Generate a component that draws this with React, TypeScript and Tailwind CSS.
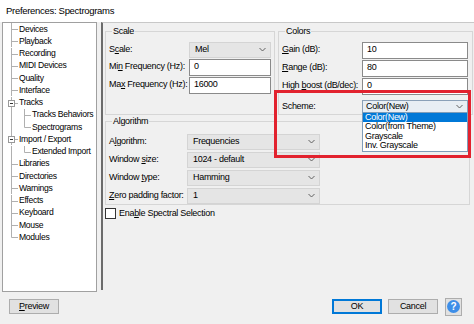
import React from "react";

const FONT = { fontFamily: "'Liberation Sans', Arial, sans-serif" };

type Node = { label: string; depth: 0 | 1; expander?: boolean; lastChild?: boolean; last?: boolean };

const tree: Node[] = [
  { label: "Devices", depth: 0 },
  { label: "Playback", depth: 0 },
  { label: "Recording", depth: 0 },
  { label: "MIDI Devices", depth: 0 },
  { label: "Quality", depth: 0 },
  { label: "Interface", depth: 0 },
  { label: "Tracks", depth: 0, expander: true },
  { label: "Tracks Behaviors", depth: 1 },
  { label: "Spectrograms", depth: 1, lastChild: true },
  { label: "Import / Export", depth: 0, expander: true },
  { label: "Extended Import", depth: 1, lastChild: true },
  { label: "Libraries", depth: 0 },
  { label: "Directories", depth: 0 },
  { label: "Warnings", depth: 0 },
  { label: "Effects", depth: 0 },
  { label: "Keyboard", depth: 0 },
  { label: "Mouse", depth: 0 },
  { label: "Modules", depth: 0, last: true },
];

function TreeLines({ node }: { node: Node }) {
  const w = node.depth === 0 ? 15 : 28;
  return (
    <svg width={w} height="12" className="shrink-0" stroke="#b0b0b0" strokeWidth="1" fill="none">
      <line x1="8.5" y1="0" x2="8.5" y2={node.last ? 6.5 : 12} />
      {node.depth === 0 && <line x1="8.5" y1="6.5" x2="15" y2="6.5" />}
      {node.depth === 1 && (
        <>
          <line x1="21.5" y1="0" x2="21.5" y2={node.lastChild ? 6.5 : 12} />
          <line x1="21.5" y1="6.5" x2="28" y2="6.5" />
        </>
      )}
      {node.expander && (
        <>
          <rect x="5.5" y="3.5" width="6" height="6" fill="#fff" stroke="#999" />
          <line x1="7" y1="6.5" x2="10" y2="6.5" stroke="#333" />
        </>
      )}
    </svg>
  );
}

function Chevron() {
  return (
    <svg width="7" height="5" viewBox="0 0 7 5" className="shrink-0">
      <path d="M0.5 1 L3.5 4 L6.5 1" stroke="#606060" strokeWidth="1" fill="none" />
    </svg>
  );
}

function Select({ value, width }: { value: string; width: string }) {
  return (
    <div className={`${width} h-[16px] bg-[#e5e5e5] border border-[#d4d4d4] flex items-center pl-[5px] pr-[4px] justify-between`}>
      <span>{value}</span>
      <Chevron />
    </div>
  );
}

function Input({ value, width }: { value: string; width: string }) {
  return (
    <div className={`${width} h-[17px] bg-white border border-[#8a8a8a] flex items-center pl-[4px]`}>
      {value}
    </div>
  );
}

function U({ children }: { children: React.ReactNode }) {
  return <span className="underline underline-offset-1">{children}</span>;
}

export default function App() {
  return (
    <div
      className="relative w-[474px] h-[324px] bg-[#f0f0f0] flex flex-col text-[9px] tracking-[-0.3px] text-black overflow-hidden"
      style={FONT}
    >
      <div className="h-[22px] bg-white pl-[6px] flex items-center text-[9.5px]">Preferences: Spectrograms</div>

      <div className="flex h-[270px] pl-[2px]">
        {/* tree */}
        <div className="w-[95px] h-[270px] bg-white border border-[#a0a0a0] flex flex-col text-[8.6px]">
          {tree.map((n) => (
            <div key={n.label} className="h-[12.25px] flex items-center whitespace-nowrap">
              <TreeLines node={n} />
              <span className="pl-[1px]">{n.label}</span>
            </div>
          ))}
        </div>

        {/* right panel */}
        <div className="ml-[4px] flex-1 h-[268px] border-l-2 border-l-[#6b6b6b] border-t border-t-[#c8c8c8] flex flex-col pl-[2px]">
          <div className="flex gap-[3px] mt-[2px]">
            <fieldset className="w-[167px] h-[90px] border border-[#d6d6d6] px-[3px]">
              <legend className="ml-[3px] px-[1px]">Scale</legend>
              <div className="flex flex-col gap-[1px] mt-[3px]">
                <div className="flex items-center">
                  <span className="w-[80px]">S<U>c</U>ale:</span>
                  <Select value="Mel" width="w-[82px]" />
                </div>
                <div className="flex items-center">
                  <span className="w-[80px]">Mi<U>n</U> Frequency (Hz):</span>
                  <Input value="0" width="w-[82px]" />
                </div>
                <div className="flex items-center">
                  <span className="w-[80px]">Ma<U>x</U> Frequency (Hz):</span>
                  <Input value="16000" width="w-[82px]" />
                </div>
              </div>
            </fieldset>

            <fieldset className="w-[195px] h-[90px] border border-[#d6d6d6] px-[3px]">
              <legend className="ml-[3px] px-[1px]">Colors</legend>
              <div className="flex flex-col gap-[1px] mt-[3px]">
                <div className="flex items-center">
                  <span className="w-[80px]"><U>G</U>ain (dB):</span>
                  <Input value="10" width="w-[106px]" />
                </div>
                <div className="flex items-center">
                  <span className="w-[80px]"><U>R</U>ange (dB):</span>
                  <Input value="80" width="w-[106px]" />
                </div>
                <div className="flex items-center">
                  <span className="w-[80px]">High <U>b</U>oost (dB/dec):</span>
                  <Input value="0" width="w-[106px]" />
                </div>
                <div className="flex items-start mt-[4px]">
                  <span className="w-[80px] leading-[12px]">Scheme:</span>
                  <div className="relative">
                    <div className="w-[106px] h-[14px] bg-[#e8eef4] border border-[#8aa0b8] flex items-center pl-[3px] pr-[4px] justify-between">
                      <span>Color(New)</span>
                      <Chevron />
                    </div>
                    <div className="absolute left-0 top-[12px] w-[106px] bg-white border border-[#7f9db9] flex flex-col z-10 leading-[9.5px]">
                      <div className="h-[9.5px] bg-[#0078d7] text-white pl-[2px]">Color(New)</div>
                      <div className="h-[9.5px] pl-[2px]">Color(from Theme)</div>
                      <div className="h-[9.5px] pl-[2px]">Grayscale</div>
                      <div className="h-[9.5px] pl-[2px]">Inv. Grayscale</div>
                    </div>
                  </div>
                </div>
              </div>
            </fieldset>
          </div>

          <fieldset className="w-[365px] h-[90px] border border-[#d6d6d6] px-[3px]">
            <legend className="ml-[3px] px-[1px]">Algorithm</legend>
            <div className="flex flex-col gap-[2px] mt-[5px]">
              <div className="flex items-center">
                <span className="w-[78px]">A<U>l</U>gorithm:</span>
                <Select value="Frequencies" width="w-[133px]" />
              </div>
              <div className="flex items-center">
                <span className="w-[78px]">Window <U>s</U>ize:</span>
                <Select value="1024 - default" width="w-[133px]" />
              </div>
              <div className="flex items-center">
                <span className="w-[78px]">Window <U>t</U>ype:</span>
                <Select value="Hamming" width="w-[133px]" />
              </div>
              <div className="flex items-center">
                <span className="w-[78px]"><U>Z</U>ero padding factor:</span>
                <Select value="1" width="w-[133px]" />
              </div>
            </div>
          </fieldset>

          <div className="flex items-center mt-[2px] gap-[3px]">
            <div className="w-[11px] h-[11px] bg-white border border-[#333]" />
            <span>Ena<U>b</U>le Spectral Selection</span>
          </div>
        </div>
      </div>

      {/* bottom buttons */}
      <div className="flex-1 flex items-center pb-[3px] pl-[9px] pr-[12px]">
        <div className="w-[50px] h-[15px] bg-[#e1e1e1] border border-[#adadad] flex items-center justify-center">
          <span><U>P</U>review</span>
        </div>
        <div className="flex-1" />
        <div className="w-[50px] h-[15px] bg-[#e1e1e1] border-2 border-[#0078d7] flex items-center justify-center">OK</div>
        <div className="ml-[6px] w-[50px] h-[15px] bg-[#e1e1e1] border border-[#adadad] flex items-center justify-center">Cancel</div>
        <div className="ml-[7px] w-[17px] h-[18px] bg-[#e1e1e1] border border-[#adadad] flex items-center justify-center">
          <div className="w-[13px] h-[13px] rounded-full bg-[#3d8ee8] text-white text-[10px] font-bold flex items-center justify-center leading-none">?</div>
        </div>
      </div>

      {/* annotation highlight */}
      <div className="absolute left-[274px] top-[90px] w-[197px] h-[68px] border-[3px] border-[#e2222e] pointer-events-none" />
    </div>
  );
}
